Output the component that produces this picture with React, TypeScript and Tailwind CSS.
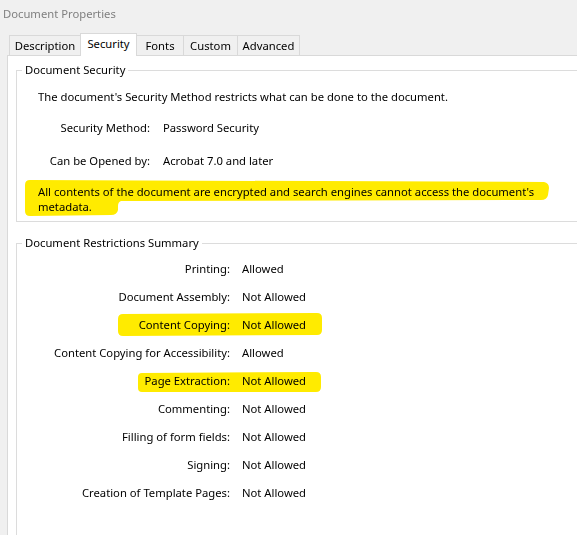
const HIGHLIGHT = "#ffeb00";

const tabs = [
  { name: "Description", width: "w-[72px]", selected: false },
  { name: "Security", width: "w-[57px]", selected: true },
  { name: "Fonts", width: "w-[48px]", selected: false },
  { name: "Custom", width: "w-[55px]", selected: false },
  { name: "Advanced", width: "w-[63px]", selected: false },
];

const restrictions = [
  { label: "Printing:", value: "Allowed" },
  { label: "Document Assembly:", value: "Not Allowed" },
  { label: "Content Copying:", value: "Not Allowed" },
  { label: "Content Copying for Accessibility:", value: "Allowed" },
  { label: "Page Extraction:", value: "Not Allowed" },
  { label: "Commenting:", value: "Not Allowed" },
  { label: "Filling of form fields:", value: "Not Allowed" },
  { label: "Signing:", value: "Not Allowed" },
  { label: "Creation of Template Pages:", value: "Not Allowed" },
];

// Highlighter strokes drawn on top of the dialog, multiplied so text stays dark.
const Highlights = () => (
  <svg
    className="pointer-events-none absolute inset-0 mix-blend-multiply"
    width="577"
    height="535"
    viewBox="0 0 577 535"
  >
    <path
      fill={HIGHLIGHT}
      d="M30 180 L544 182 Q549 183 549 188 L548 195 Q547 200 541 200 L121 201 Q118 202 118 206 L118 210 Q117 215 111 215 L30 216 Q25 216 25 211 L25 185 Q25 180 30 180 Z"
    />
    <path
      fill={HIGHLIGHT}
      d="M123 314 L317 313 Q322 313 322 318 L322 330 Q322 335 317 335 L123 336 Q118 336 118 331 L118 319 Q118 314 123 314 Z"
    />
    <path
      fill={HIGHLIGHT}
      d="M142 373 L316 372 Q321 372 321 377 L321 387 Q321 392 316 392 L142 392 Q138 392 138 388 L138 377 Q138 373 142 373 Z"
    />
  </svg>
);

const App = () => {
  return (
    <div className="relative h-[535px] w-[577px] overflow-hidden bg-[#f0f0f0] font-['Noto_Sans',sans-serif] text-[11.25px] leading-[15px] text-black">
      <div className="h-[33px] pl-[3px] pt-[6px] text-[#808080]">Document Properties</div>

      <div className="flex h-[22px] items-end pl-[9px]">
        {tabs.map((tab, i) => (
          <div
            key={tab.name}
            className={`flex items-center justify-center border border-b-0 border-[#d9d9d9] ${tab.width} ${
              i > 0 ? "-ml-px" : ""
            } ${tab.selected ? "relative z-10 -mb-px h-[23px] bg-white pb-[3px]" : "h-[20px] bg-[#f0f0f0]"}`}
          >
            {tab.name}
          </div>
        ))}
      </div>

      <div className="ml-[7px] h-[480px] w-[600px] border-l border-t border-[#d9d9d9] bg-white pl-2 pt-[6px]">
        <fieldset className="w-[620px] border border-[#dcdcdc]">
          <legend className="ml-[5px] px-[3px] leading-4">Document Security</legend>
          <div className="flex flex-col pb-[7px] pl-[21px] pt-[11px]">
            <p>The document's Security Method restricts what can be done to the document.</p>
            <div className="mt-[16px] flex">
              <span className="w-[112px] text-right">Security Method:</span>
              <span className="ml-[13px]">Password Security</span>
            </div>
            <div className="mt-[18px] flex">
              <span className="w-[112px] text-right">Can be Opened by:</span>
              <span className="ml-[13px]">Acrobat 7.0 and later</span>
            </div>
            <p className="mt-[16px] max-w-[520px]">
              All contents of the document are encrypted and search engines cannot access the document's metadata.
            </p>
          </div>
        </fieldset>

        <fieldset className="mt-[13px] h-[400px] w-[620px] border border-[#dcdcdc]">
          <legend className="ml-[5px] px-[3px] leading-4">Document Restrictions Summary</legend>
          <div className="flex flex-col gap-[13px] pt-[10px]">
            {restrictions.map((row) => (
              <div key={row.label} className="flex">
                <span className="w-[213px] text-right">{row.label}</span>
                <span className="ml-3">{row.value}</span>
              </div>
            ))}
          </div>
        </fieldset>
      </div>

      <Highlights />
    </div>
  );
};

export default App;
